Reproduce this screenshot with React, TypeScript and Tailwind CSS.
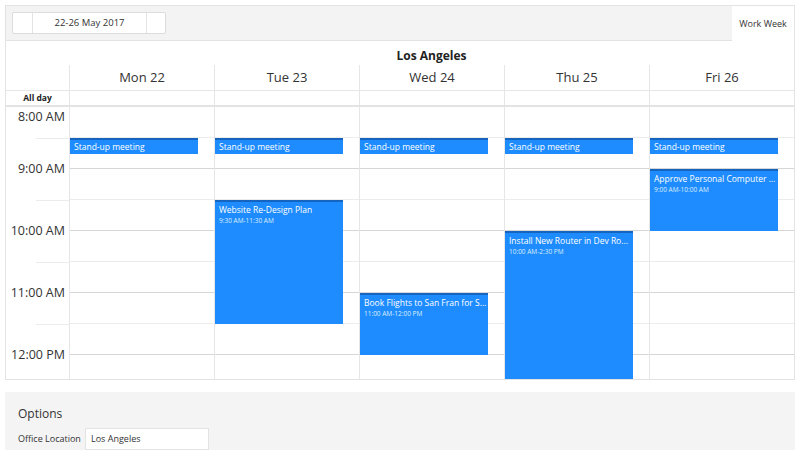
import React from "react";

type CalEvent = {
  day: number;
  title: string;
  time?: string;
  start: number; // minutes after 8:00
  end: number;
};

const SLOT = 31; // px per half hour
const DAYS = ["Mon 22", "Tue 23", "Wed 24", "Thu 25", "Fri 26"];
const HOURS = ["9:00 AM", "10:00 AM", "11:00 AM", "12:00 PM"];

const EVENTS: CalEvent[] = [
  ...[0, 1, 2, 3, 4].map((d) => ({ day: d, title: "Stand-up meeting", start: 30, end: 45 })),
  { day: 1, title: "Website Re-Design Plan", time: "9:30 AM-11:30 AM", start: 90, end: 210 },
  { day: 2, title: "Book Flights to San Fran for S...", time: "11:00 AM-12:00 PM", start: 180, end: 240 },
  { day: 3, title: "Install New Router in Dev Ro...", time: "10:00 AM-2:30 PM", start: 120, end: 390 },
  { day: 4, title: "Approve Personal Computer ...", time: "9:00 AM-10:00 AM", start: 60, end: 120 },
];

function EventBox({ ev }: { ev: CalEvent }) {
  const top = (ev.start / 30) * SLOT;
  const height = ((ev.end - ev.start) / 30) * SLOT;
  return (
    <div
      className="absolute left-0 w-[128px] overflow-hidden border-t-2 border-[#1565c0] bg-[#1e8cff] px-[4px] text-white"
      style={{ top, height }}
    >
      {ev.time ? (
        <div className="pt-[2px]">
          <div className="whitespace-nowrap text-[8.5px] leading-[12px]">{ev.title}</div>
          <div className="whitespace-nowrap text-[6.5px] leading-[9px] text-[#dcecff]">{ev.time}</div>
        </div>
      ) : (
        <div className="whitespace-nowrap text-[8.5px] leading-[13px]">{ev.title}</div>
      )}
    </div>
  );
}

function DayColumn({ index }: { index: number }) {
  return (
    <div className="relative w-[145px] border-l border-[#e6e6e6]">
      {Array.from({ length: 9 }).map((_, i) => (
        <div
          key={i}
          className={
            i % 2 === 1
              ? "h-[31px] border-b border-[#d6d6d6]"
              : "h-[31px] border-b border-[#ececec]"
          }
        />
      ))}
      {EVENTS.filter((e) => e.day === index).map((ev, i) => (
        <EventBox key={i} ev={ev} />
      ))}
    </div>
  );
}

export default function App() {
  return (
    <div
      className="h-[450px] w-[800px] overflow-hidden bg-white p-[5px] text-[#333]"
      style={{ fontFamily: '"Open Sans", "Noto Sans", sans-serif' }}
    >
      {/* Scheduler */}
      <div className="h-[375px] overflow-hidden border border-[#e3e3e3]">
        {/* Toolbar */}
        <div className="flex h-[35px] items-stretch bg-[#f3f3f3]">
          <div className="flex flex-1 items-start border-b border-[#e3e3e3] pl-[6px] pt-[6px]">
            <div className="flex h-[22px] items-stretch rounded-[2px] border border-[#dcdcdc] bg-white">
              <div className="w-[20px] border-r border-[#e3e3e3]" />
              <div className="flex w-[113px] items-center justify-center text-[9.5px] text-[#333]">
                22-26 May 2017
              </div>
              <div className="w-[19px] border-l border-[#e3e3e3]" />
            </div>
          </div>
          <div className="flex w-[62px] items-center justify-center bg-white text-[9px] text-[#333]">
            Work Week
          </div>
        </div>

        {/* Title */}
        <div className="flex h-[24px] items-start pl-[63px] pt-[6px]">
          <div className="flex-1 text-center text-[12px] font-bold leading-[18px] text-[#222]">Los Angeles</div>
        </div>

        {/* Day headers */}
        <div className="flex h-[26px] border-b border-[#e6e6e6]">
          <div className="w-[63px]" />
          {DAYS.map((d) => (
            <div
              key={d}
              className="flex w-[145px] items-center justify-center border-l border-[#e6e6e6] text-[13px] text-[#333]"
            >
              {d}
            </div>
          ))}
        </div>

        {/* All day */}
        <div className="flex h-[16px] border-b-2 border-[#e3e3e3]">
          <div className="flex w-[63px] items-center justify-center text-[8.5px] font-bold text-[#222]">
            All day
          </div>
          {DAYS.map((d) => (
            <div key={d} className="w-[145px] border-l border-[#e6e6e6]" />
          ))}
        </div>

        {/* Time grid */}
        <div className="flex h-[274px] overflow-hidden">
          <div className="w-[63px]">
            <div className="flex h-[31px] items-start justify-end pr-[4px] text-[12.5px] leading-[20px] text-[#333]">
              8:00 AM
            </div>
            <div className="ml-[30px] border-b border-[#ececec]" />
            {HOURS.map((h) => (
              <div key={h} className="ml-[30px] flex h-[62px] items-center justify-end whitespace-nowrap border-b border-[#ececec] pr-[4px] text-[12.5px] text-[#333]">
                {h}
              </div>
            ))}
          </div>
          {DAYS.map((d, i) => (
            <DayColumn key={d} index={i} />
          ))}
        </div>
      </div>

      {/* Options */}
      <div className="mt-[12px] h-[60px] bg-[#f4f4f4] px-[13px] pt-[14px]">
        <div className="text-[12px] leading-[16px] text-[#333]">Options</div>
        <div className="mt-[6px] flex items-center">
          <div className="w-[67px] text-[9px] text-[#333]">Office Location</div>
          <div className="flex h-[22px] w-[124px] items-center border border-[#e3e3e3] bg-white px-[5px] text-[9px] text-[#333]">
            Los Angeles
          </div>
        </div>
      </div>
    </div>
  );
}
